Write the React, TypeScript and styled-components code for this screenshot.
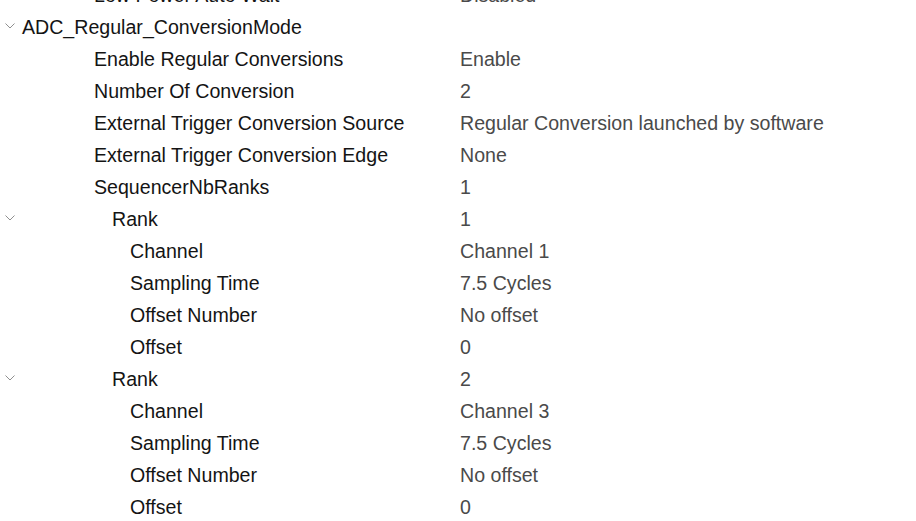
import React from "react";
import styled, { createGlobalStyle } from "styled-components";

const Global = createGlobalStyle`
  html, body { margin: 0; padding: 0; background: #ffffff; overflow: hidden; }
  body { font-family: "Liberation Sans", Arial, sans-serif; }
`;

const Tree = styled.div`
  display: flex;
  flex-direction: column;
  margin-top: -21px;
  width: 916px;
`;

const Row = styled.div`
  position: relative;
  display: grid;
  grid-template-columns: 460px 1fr;
  height: 32px;
  align-items: center;
  font-size: 19.6px;
`;

const Label = styled.div<{ $indent: number }>`
  padding-left: ${(p) => p.$indent}px;
  color: #141414;
  white-space: nowrap;
`;

const Value = styled.div`
  color: #4a4a4a;
  white-space: nowrap;
`;

const Twisty = styled.svg`
  position: absolute;
  left: 4px;
  top: 11px;
  width: 12px;
  height: 8px;
`;

type Item = { label: string; value?: string; indent: number; open?: boolean };

const items: Item[] = [
  { label: "Low Power Auto Wait", value: "Disabled", indent: 94 },
  { label: "ADC_Regular_ConversionMode", indent: 22, open: true },
  { label: "Enable Regular Conversions", value: "Enable", indent: 94 },
  { label: "Number Of Conversion", value: "2", indent: 94 },
  { label: "External Trigger Conversion Source", value: "Regular Conversion launched by software", indent: 94 },
  { label: "External Trigger Conversion Edge", value: "None", indent: 94 },
  { label: "SequencerNbRanks", value: "1", indent: 94 },
  { label: "Rank", value: "1", indent: 112, open: true },
  { label: "Channel", value: "Channel 1", indent: 130 },
  { label: "Sampling Time", value: "7.5 Cycles", indent: 130 },
  { label: "Offset Number", value: "No offset", indent: 130 },
  { label: "Offset", value: "0", indent: 130 },
  { label: "Rank", value: "2", indent: 112, open: true },
  { label: "Channel", value: "Channel 3", indent: 130 },
  { label: "Sampling Time", value: "7.5 Cycles", indent: 130 },
  { label: "Offset Number", value: "No offset", indent: 130 },
  { label: "Offset", value: "0", indent: 130 },
];

export default function App() {
  return (
    <>
      <Global />
      <Tree>
        {items.map((it, i) => (
          <Row key={i}>
            {it.open && (
              <Twisty viewBox="0 0 12 8">
                <path d="M1.5 1.5 L6 6 L10.5 1.5" fill="none" stroke="#8f8f8f" strokeWidth="1" />
              </Twisty>
            )}
            <Label $indent={it.indent}>{it.label}</Label>
            <Value>{it.value ?? ""}</Value>
          </Row>
        ))}
      </Tree>
    </>
  );
}
